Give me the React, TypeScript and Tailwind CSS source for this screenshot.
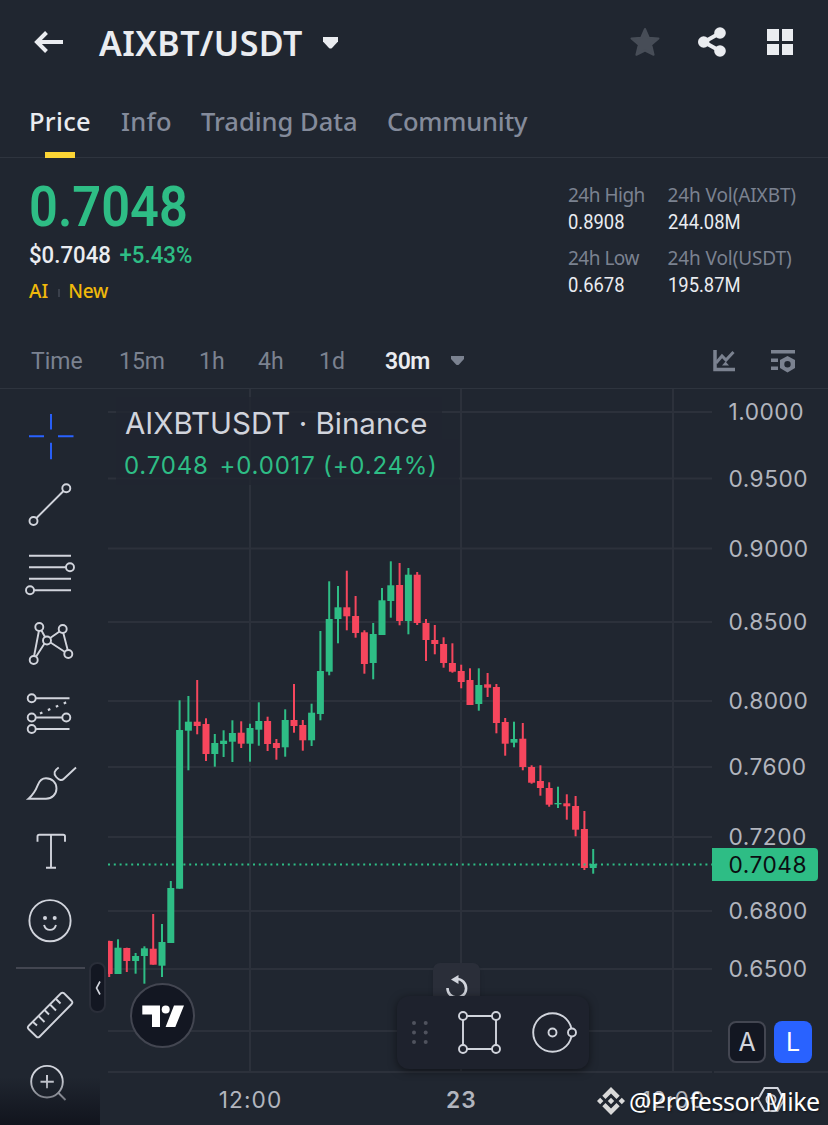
import type { ReactNode } from 'react'

type Candle = [color: 'r' | 'g', high: number, top: number, bottom: number, low: number]

const UP = '#2ebd85'
const DOWN = '#f6465d'

// chart coordinates: y starts at the top edge of the plot
const candles: Candle[] = [
  ['r', 551.7, 552, 585, 588],
  ['g', 550.3, 558.7, 585, 585],
  ['r', 558.7, 559, 572, 583],
  ['g', 564, 567, 572, 584.7],
  ['g', 557.3, 559.3, 567, 594.7],
  ['r', 525, 559.7, 575.7, 575.7],
  ['g', 535, 553, 576.7, 588],
  ['g', 492, 499, 554, 554],
  ['g', 311.3, 341, 499.7, 499.7],
  ['g', 307, 332.7, 341.7, 381.3],
  ['r', 291, 332.7, 337, 345.3],
  ['r', 329.3, 335, 365, 372],
  ['g', 345, 354, 365, 377.7],
  ['g', 341.3, 351.7, 355, 368],
  ['g', 331.3, 344, 352.7, 373],
  ['r', 332.3, 343.7, 354.7, 359],
  ['g', 334.7, 339, 354.7, 372.7],
  ['g', 313.3, 332, 340.7, 356.7],
  ['r', 327.7, 332, 355, 362],
  ['r', 350, 354, 359, 370.7],
  ['g', 320.3, 331, 358.3, 367.7],
  ['r', 295, 331, 337, 343.7],
  ['r', 331, 336, 351.3, 361.7],
  ['g', 314.7, 323.7, 351.3, 357],
  ['g', 242, 282, 325, 331.3],
  ['g', 192.3, 230, 282.7, 286.3],
  ['g', 197, 218.3, 230, 254.3],
  ['r', 181.7, 218.3, 227.3, 241.3],
  ['r', 207, 227, 244, 248.7],
  ['r', 241.3, 243.3, 275, 284.7],
  ['g', 234, 245, 274, 290.3],
  ['g', 199, 211.3, 246, 246],
  ['g', 172.3, 196.3, 212, 228.7],
  ['r', 174, 196, 232, 236.3],
  ['g', 179, 185.7, 232, 245.3],
  ['r', 183, 185.7, 234, 236],
  ['r', 230, 234, 251, 272],
  ['r', 236, 251, 255, 265.3],
  ['r', 248.3, 255, 274, 278.7],
  ['r', 254.3, 274, 282.7, 283.7],
  ['r', 275.7, 282, 293, 299.3],
  ['r', 279.3, 291, 316, 316],
  ['g', 279.3, 296, 315, 321.7],
  ['r', 284, 295.3, 298.7, 308],
  ['r', 295, 298, 334, 344.3],
  ['r', 329, 333, 354.7, 366.7],
  ['g', 332.7, 350, 353.7, 358.3],
  ['r', 334, 349.7, 378, 381.3],
  ['r', 376.3, 378, 393.7, 394.7],
  ['r', 376.3, 392, 399, 406.7],
  ['r', 393.3, 399, 415.7, 417.7],
  ['g', 397.7, 414, 415.3, 419],
  ['r', 405.3, 414.3, 417.3, 430.7],
  ['r', 407, 417, 440.7, 447.3],
  ['r', 422, 440, 479, 481],
  ['g', 460, 475, 479, 484.7],
]

const priceTicks = [
  { y: 23, label: '1.0000' },
  { y: 89.5, label: '0.9500' },
  { y: 159.5, label: '0.9000' },
  { y: 233, label: '0.8500' },
  { y: 312, label: '0.8000' },
  { y: 378, label: '0.7600' },
  { y: 448, label: '0.7200' },
  { y: 522, label: '0.6800' },
  { y: 580, label: '0.6500' },
  { y: 642, label: '' },
]

const timeTicks = [
  { x: 142, label: '12:00', bold: false },
  { x: 353, label: '23', bold: true },
  { x: 565, label: '12:00', bold: false },
]

function Header() {
  return (
    <header className="flex h-[86px] items-center pl-[33px] pr-[35px] text-[#eaecf0]">
      <svg width="30" height="24" viewBox="0 0 30 24" fill="none" stroke="currentColor" strokeWidth="4">
        <path d="M30 11H4M13.5 1.500 4 11l9.500 9.500" />
      </svg>
      <h1 className="ml-[36px] w-[204px] whitespace-nowrap font-['Noto_Sans','Liberation_Sans',sans-serif] text-[34px] font-semibold leading-none tracking-[0.4px]">
        AIXBT/USDT
      </h1>
      <svg className="ml-[20px]" width="15" height="12" viewBox="0 0 15 12" fill="currentColor">
        <path d="M0 0h15v4.500L9 11q-1.500 1.200-3 0L0 4.500z" />
      </svg>
      <div className="mb-[2px] ml-auto flex items-center">
        <svg width="30" height="30" viewBox="0 0 30 30" fill="#474d57" stroke="#474d57" strokeWidth="2" strokeLinejoin="round">
          <path d="m15 2 3.800 8.700 9.700.8-7.300 6.300 2.400 10L15 23.500l-8.600 4.300 2.400-10L1.500 11.500l9.700-.8z" />
        </svg>
        <svg className="ml-[38px]" width="28" height="30" viewBox="0 0 28 30" fill="currentColor">
          <path d="M6 15 22 6M6 15l16 9" stroke="currentColor" strokeWidth="4" />
          <circle cx="5.700" cy="15" r="5.700" />
          <circle cx="22" cy="6" r="5.800" />
          <circle cx="22" cy="24" r="5.800" />
        </svg>
        <div className="ml-[41px] grid grid-cols-2 gap-[3px]">
          <i className="size-[11.500px] bg-[#eaecf0]" />
          <i className="size-[11.500px] bg-[#eaecf0]" />
          <i className="size-[11.500px] bg-[#eaecf0]" />
          <i className="size-[11.500px] bg-[#eaecf0]" />
        </div>
      </div>
    </header>
  )
}

function Tabs() {
  return (
    <nav className="flex h-[72px] items-stretch gap-[30px] border-b border-[#2e343e] pl-[29px] font-['Noto_Sans','Liberation_Sans',sans-serif] text-[25.500px] font-medium leading-[71px] text-[#848b9b]">
      <div className="relative w-[62px] whitespace-nowrap tracking-[0.3px] text-[#eaecf0]">
        Price
        <span className="absolute bottom-[-1px] left-[16px] h-[6px] w-[30px] bg-[#fcd535]" />
      </div>
      <div className="w-[50px] whitespace-nowrap tracking-[0.3px]">Info</div>
      <div className="w-[156px] whitespace-nowrap">Trading Data</div>
      <div className="whitespace-nowrap tracking-[-0.2px]">Community</div>
    </nav>
  )
}

function Stat({ label, value, tight = false }: { label: string; value: string; tight?: boolean }) {
  return (
    <div className="flex flex-col whitespace-nowrap">
      <span
        className={`font-['Noto_Sans','Liberation_Sans',sans-serif] text-[19px] leading-[27px] text-[#7b8290] ${tight ? 'tracking-[-0.5px]' : 'tracking-[-0.1px]'}`}
      >
        {label}
      </span>
      <span className="origin-left scale-x-[0.92] font-[Roboto,'Liberation_Sans',sans-serif] text-[20px] leading-[27px] text-[#eaecf0]">
        {value}
      </span>
    </div>
  )
}

function Summary() {
  return (
    <section className="flex h-[176px] justify-between pl-[29px] pr-[28px]">
      <div className="flex flex-col font-[Roboto,'Liberation_Sans',sans-serif]">
        <div className="mt-[20px] origin-left scale-x-[0.92] text-[55px] font-semibold leading-[58px] text-[#2ebd85]">0.7048</div>
        <div className="mt-[6px] flex origin-left scale-x-[0.965] gap-[9px] text-[23px] font-medium leading-[28px]">
          <span className="text-[#eaecf0]">$0.7048</span>
          <span className="text-[#2ebd85]">+5.43%</span>
        </div>
        <div className="mt-[7px] flex items-center font-['Noto_Sans','Liberation_Sans',sans-serif] text-[19px] font-medium leading-[28px] text-[#f0b90b]">
          <span>AI</span>
          <i className="ml-[10px] mr-[8px] mt-[4px] h-[8px] w-[2px] bg-[#3a404b]" />
          <span className="tracking-[-0.2px]">New</span>
        </div>
      </div>
      <div className="grid w-[232px] grid-cols-[99.500px_1fr] content-start gap-y-[9px] pt-[24px]">
        <Stat label="24h High" value="0.8908" tight />
        <Stat label="24h Vol(AIXBT)" value="244.08M" />
        <Stat label="24h Low" value="0.6678" tight />
        <Stat label="24h Vol(USDT)" value="195.87M" />
      </div>
    </section>
  )
}

function Intervals() {
  return (
    <div className="flex h-[55px] items-center border-b border-[#2e343e] pl-[31px] pr-[32px] text-[#7b8290]">
      <div className="flex pt-[3px] font-[Roboto,'Liberation_Sans',sans-serif] text-[23px]">
        <span className="w-[88px]">Time</span>
        <span className="w-[80px]">15m</span>
        <span className="w-[59px]">1h</span>
        <span className="w-[61px]">4h</span>
        <span className="w-[66px]">1d</span>
        <span className="w-[66px] font-semibold tracking-[-0.5px] text-[#eaecf0]">30m</span>
      </div>
      <svg width="13" height="10" viewBox="0 0 13 10" fill="currentColor">
        <path d="M0 0h13v3L8 8.500q-1.500 1.200-3 0L0 3z" />
      </svg>
      <svg className="ml-auto" width="22" height="22" viewBox="0 0 22 22" fill="none" stroke="currentColor" strokeWidth="3.500">
        <path d="M2 0v19.500h20" />
        <path d="M3 13 9 6l4 4 7.500-8" strokeWidth="3" />
        <path d="M9 15.500h7l-3.500-4z" fill="currentColor" stroke="none" />
      </svg>
      <svg className="ml-[36px]" width="25" height="24" viewBox="0 0 25 24" fill="currentColor">
        <path d="M0 1h24v3.500H0zM0 9.500h7V13H0zM0 17.500h7V21H0z" />
        <path fillRule="evenodd" d="m16.500 7 7.500 4v8l-7.500 4.500L9 19v-8zm0 5a3.200 3.200 0 1 0 0 6.400 3.200 3.200 0 0 0 0-6.400z" />
      </svg>
    </div>
  )
}

function Tool({ children, color = '#d1d4dc' }: { children: ReactNode; color?: string }) {
  return (
    <svg width="100" height="69" viewBox="0 0 100 69" fill="none" stroke={color} strokeWidth="1.900">
      {children}
    </svg>
  )
}

function DrawingRail() {
  return (
    <aside className="relative flex w-[108px] flex-col pt-[12px]">
      <Tool color="#2962ff">
        <path d="M51 13v15.500M51 41.700v16.500M29 35.300h15M58 35.300h15.500" />
      </Tool>
      <Tool>
        <path d="M36.500 48 63.500 21" />
        <circle cx="66.300" cy="18.200" r="4" />
        <circle cx="33.500" cy="51" r="4" />
      </Tool>
      <Tool>
        <path d="M29 16.700h42M29 28.300h37M29 39.800h42M34 51.300h37" />
        <circle cx="70" cy="28.300" r="4" />
        <circle cx="30" cy="51.300" r="4" />
      </Tool>
      <Tool>
        <path d="m38.900 23-4.800 25M41.500 22.500l3.500 6.500M50.200 30l9.300-6.500M44.500 35.500 36 48.700M50.500 34.500l14.500 9.500M63.300 25l4.400 17" />
        <circle cx="39.300" cy="19" r="4" />
        <circle cx="62.700" cy="21" r="4" />
        <circle cx="47" cy="32.500" r="4" />
        <circle cx="68.300" cy="46" r="4" />
        <circle cx="33.700" cy="52" r="4" />
      </Tool>
      <Tool>
        <path d="M36 21.300h33.500M36 40.500h26M36 52h33.500" />
        <path d="m40 36.500 27-11.500" strokeDasharray="2.600 6" strokeWidth="2.200" />
        <circle cx="31.700" cy="21.300" r="4" />
        <circle cx="31.700" cy="40.500" r="4" />
        <circle cx="66.300" cy="40.500" r="4" />
        <circle cx="31.700" cy="52" r="4" />
      </Tool>
      <Tool>
        <path d="M28.500 52.700c5-4 7.500-9 9.500-14 1.500-4 4-6.500 8-6.500 6 0 10.500 4.500 10.500 10.300S52 52.700 46 52.700z" />
        <path d="M58.700 21.500c-4.500 3-5.500 6-2.500 9.500 3 3.500 5.500 4 8 1.500l11.800-11" />
      </Tool>
      <Tool>
        <path d="M37.500 26.700v-5.200q0-1.800 1.800-1.800h23.900q1.800 0 1.800 1.800v5.200M51 19.700v33M46 52.700h10" />
      </Tool>
      <Tool>
        <circle cx="50" cy="36.700" r="20.600" />
        <circle cx="45" cy="34" r="2" fill="#d1d4dc" stroke="none" />
        <circle cx="54.700" cy="34" r="2" fill="#d1d4dc" stroke="none" />
        <path d="M44 41c2 6.500 10 6.500 12 0" />
      </Tool>
      <hr className="ml-[16px] mt-[14px] w-[69px] border-t-2 border-[#434651]" />
      <div className="h-[11px]" />
      <Tool>
        <path d="M61 13.300q1.500-1.300 3 0l7.700 7.700q1.300 1.500 0 3L39.500 56.700q-1.500 1.300-3 0L28.500 49q-1.300-1.500 0-3z" />
        <path d="m33 42 4 3.500M38.500 36l6 6M44.500 30l4.500 4.500M50 24.500l6 6M56 19l4.500 4.500" />
      </Tool>
      <Tool>
        <circle cx="47" cy="32.700" r="15.800" />
        <path d="M40.500 32.700h13.300M47 26v13.300M58.500 44l7 7" />
      </Tool>
      <div className="absolute bottom-0 left-0 h-[48px] w-[100px] bg-linear-to-b from-transparent to-[#11141d]" />
      <div className="absolute left-[89px] top-[573px] flex h-[51px] w-[17px] items-center justify-center rounded-[8px] border-2 border-[#2a2e39] bg-[#131722]">
        <svg width="6" height="14" viewBox="0 0 6 14" fill="none" stroke="#d1d4dc" strokeWidth="1.600">
          <path d="M5 .5 1.500 7 5 13.500" />
        </svg>
      </div>
    </aside>
  )
}

function Plot() {
  return (
    <svg
      width="720"
      height="736"
      viewBox="0 0 720 736"
      fontFamily="Inter, 'Liberation Sans', sans-serif"
      fontSize="22.700"
      letterSpacing="0.5"
      fill="#b2b5be"
    >
      <g stroke="#2c313b" strokeWidth="2">
        {priceTicks.map((t) => (
          <path key={t.y} d={`M0 ${t.y}H604`} />
        ))}
        {timeTicks.map((t) => (
          <path key={t.x} d={`M${t.x} 0V682`} />
        ))}
        <path d="M0 683H604M606 683H720" />
      </g>
      <rect x="8" y="8" width="326" height="42" fill="#202630" fillOpacity="0.75" />
      <rect x="8" y="50" width="343" height="46" fill="#202630" fillOpacity="0.75" />
      {candles.map(([color, high, top, bottom, low], i) => {
        const x = 1.200 + i * 8.8
        return (
          <g key={i} fill={color === 'g' ? UP : DOWN}>
            <rect x={x - 1} y={high} width="2" height={low - high} />
            <rect x={x - 3.500} y={top} width="7" height={bottom - top} />
          </g>
        )
      })}
      <path d="M0 475.500H604" stroke={UP} strokeWidth="2" strokeDasharray="2 3.800" />
      {priceTicks.map((t) => (
        <text key={t.y} x="620.500" y={t.y + 8}>
          {t.label}
        </text>
      ))}
      <path d="M604 459h102q4 0 4 4v25q0 4-4 4H604z" fill={UP} />
      <text x="620.500" y="484" fill="#0b0e11">
        0.7048
      </text>
      {timeTicks.map((t) => (
        <text key={t.x} x={t.x + 0.5} y="719" textAnchor="middle" letterSpacing="1.100" fontWeight={t.bold ? 600 : 400}>
          {t.label}
        </text>
      ))}
      <g fill="none" stroke="#d1d4dc" strokeWidth="2">
        <path d="m656.500 699 -6.500 11.500 6.500 11.500h13l6.500-11.500-6.500-11.500z" />
        <circle cx="663" cy="710.500" r="4.500" />
      </g>
    </svg>
  )
}

function Chart() {
  return (
    <div className="relative w-[720px] overflow-hidden font-[Inter,'Liberation_Sans',sans-serif]">
      <Plot />
      <div className="absolute left-[16px] top-[15px] whitespace-nowrap">
        <div className="pl-px text-[29.500px] leading-[38px] text-[#d1d4dc]">AIXBTUSDT · Binance</div>
        <div className="mt-[9px] flex gap-[11px] text-[24px] leading-[30px] tracking-[0.8px] text-[#2ebd85]">
          <span>0.7048</span>
          <span>+0.0017 (+0.24%)</span>
        </div>
      </div>

      <div className="absolute left-[22px] top-[594px] size-[65px] rounded-full border-2 border-[#434651] bg-[#131722]">
        <svg width="61" height="61" viewBox="0 0 61 61" fill="#fff">
          <path d="M10.300 20.500H28V42h-8V29.500h-9.700zM42 20.500h10L43.300 42h-9.700z" />
          <circle cx="33.700" cy="24.500" r="4" />
        </svg>
      </div>

      <div className="absolute left-[325px] top-[574px] flex h-[50px] w-[47px] justify-center rounded-[7px] bg-[#2a2e39] pt-[12px] shadow-md">
        <svg width="24" height="26" viewBox="0 0 24 26" fill="none" stroke="#d1d4dc" strokeWidth="2.600">
          <path d="M2.500 13a9.300 9.300 0 1 0 9.300-9" />
          <path d="M13.500 0v9L6 4.500z" fill="#d1d4dc" stroke="none" />
        </svg>
      </div>
      <div className="absolute left-[289px] top-[607px] h-[73px] w-[192px] rounded-[12px] bg-[#1e222d] shadow-[0_2px_8px_rgba(0,0,0,0.5)]">
        <svg width="192" height="73" viewBox="0 0 192 73" fill="none" stroke="#d1d4dc" strokeWidth="1.900">
          <g fill="#50535e" stroke="none">
            <circle cx="17" cy="27" r="2" />
            <circle cx="28.700" cy="27" r="2" />
            <circle cx="17" cy="36.500" r="2" />
            <circle cx="28.700" cy="36.500" r="2" />
            <circle cx="17" cy="46" r="2" />
            <circle cx="28.700" cy="46" r="2" />
          </g>
          <path d="M70 20h25M70 53h25M66 24v25M99 24v25" />
          <circle cx="66" cy="20" r="4" />
          <circle cx="99" cy="20" r="4" />
          <circle cx="66" cy="53" r="4" />
          <circle cx="99" cy="53" r="4" />
          <circle cx="155.500" cy="36.500" r="19.300" />
          <circle cx="155.500" cy="36.500" r="4" />
          <circle cx="175" cy="36.500" r="4" fill="#1e222d" />
        </svg>
      </div>

      <div className="absolute left-[620px] top-[632px] flex gap-[8px] text-[25px] text-[#d1d4dc]">
        <div className="flex h-[42px] w-[38px] items-center justify-center rounded-[8px] border-2 border-[#434651] bg-[#131722] pt-px">A</div>
        <div className="flex h-[42px] w-[38px] items-center justify-center rounded-[8px] bg-[#2962ff] pt-px text-white">L</div>
      </div>
    </div>
  )
}

function Watermark() {
  return (
    <div className="absolute left-[597px] top-[1085px] flex items-center gap-[4px] whitespace-nowrap font-['Noto_Sans','Liberation_Sans',sans-serif] text-[25px] leading-[32px] tracking-[-0.47px] text-white [text-shadow:1px_1px_2px_rgba(0,0,0,0.5)]">
      <svg width="28" height="28" viewBox="0 0 28 28" fill="#d9d9d9">
        <path d="m14 0 8.700 8.700-3.200 3.200L14 6.400l-5.500 5.500-3.200-3.200zM14 28l8.700-8.700-3.200-3.200-5.500 5.500-5.500-5.500-3.200 3.200zM3.200 10.800 6.400 14l-3.200 3.200L0 14zM24.800 10.800 28 14l-3.200 3.200-3.200-3.200zM14 10.800l3.200 3.200-3.200 3.200-3.200-3.200z" />
      </svg>
      @Professor Mike
    </div>
  )
}

export default function App() {
  return (
    <div className="relative flex h-[1125px] w-[828px] flex-col overflow-hidden bg-[#202630]">
      <Header />
      <Tabs />
      <Summary />
      <Intervals />
      <main className="flex flex-1">
        <DrawingRail />
        <Chart />
      </main>
      <Watermark />
    </div>
  )
}
